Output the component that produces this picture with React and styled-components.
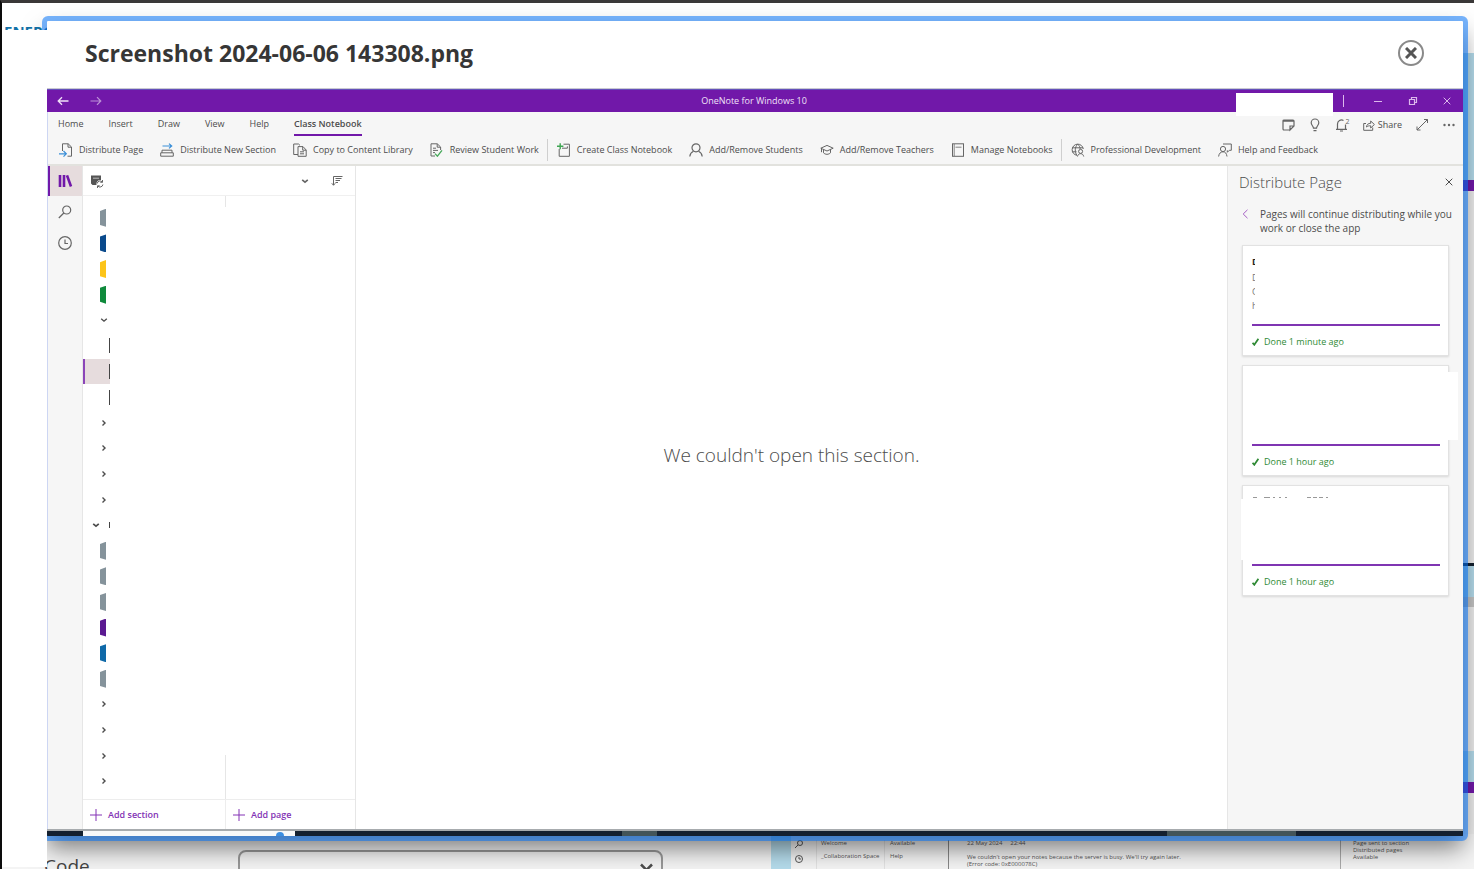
import React from 'react';
import styled, { createGlobalStyle, css } from 'styled-components';

const palette = {
  purple: '#7118a9',
  line: '#e6e6e6',
  panel: '#f6f6f6',
  text: '#4c4c4c',
  icon: '#666666',
  green: '#2f8a35',
  blue: '#3a8fd8',
};

const GlobalStyle = createGlobalStyle`
  * { box-sizing: border-box; }
  body {
    margin: 0;
    font-family: 'Open Sans', 'Noto Sans', sans-serif;
    color: ${palette.text};
    background: #fff;
  }
  button {
    margin: 0;
    padding: 0;
    border: 0;
    background: none;
    font: inherit;
    color: inherit;
    display: flex;
    align-items: center;
    white-space: nowrap;
  }
  svg { display: block; flex: none; }
  p, h1, h2, ul { margin: 0; padding: 0; }
`;

/* page behind the dialog */
const Page = styled.div`
  position: relative;
  height: 100vh;
  overflow: hidden;
  display: grid;
  grid-template-columns: 1fr 12px;
  grid-template-rows: 1fr 35px;
  border-top: 3px solid #3a3838;
  border-left: 2px solid #0c0c0c;
`;

const SiteName = styled.div`
  padding: 18px 0 0 2px;
  color: #1272a8;
  font-size: 15px;
  line-height: 20px;
  font-weight: 700;
`;

const EdgeStrip = styled.div`
  display: flex;
  flex-direction: column;
`;

const EdgePart = styled.div`
  flex: ${(p) => p.$size} 0 0;
  background: ${(p) => p.$color};
`;

const FormStrip = styled.div`
  grid-column: 1 / 3;
  display: flex;
  background: #f4f4f4;
`;

const FormLabel = styled.label`
  width: 236px;
  padding: 16px 0 0 42px;
  font-size: 19px;
  line-height: 32px;
  color: #444;
`;

const FormSelect = styled.select`
  width: 425px;
  height: 44px;
  margin-top: 16px;
  appearance: none;
  border: 2px solid #999;
  border-radius: 8px;
  background: transparent;
`;

const SelectArrow = styled.div`
  width: 108px;
  padding-top: 29px;
  svg { margin-left: -23px; }
`;

const Thumb = styled.div`
  flex: 1;
  display: flex;
  border-left: 20px solid #b5dcec;
  font-size: 6px;
  line-height: 7px;
  padding-top: 6px;
  color: #555;
  white-space: nowrap;
`;

const ThumbColumn = styled.div`
  width: ${(p) => p.$width}px;
  padding-left: ${(p) => p.$indent || 0}px;
  border-right: 1px solid ${(p) => p.$line || 'transparent'};
  overflow: hidden;
  p + p { margin-top: ${(p) => p.$gap || 0}px; }
`;

/* dialog */
const Dialog = styled.section`
  position: absolute;
  top: 18px;
  left: 45px;
  right: 11px;
  bottom: 33px;
  display: flex;
  flex-direction: column;
  background: #fff;
  border-radius: 1px;
  outline: 5px solid rgba(5, 116, 250, 0.54);
  box-shadow: 0 12px 24px rgba(0, 0, 0, 0.5);
`;

const DialogHeader = styled.header`
  height: 68px;
  flex: none;
  display: flex;
  align-items: center;
  justify-content: space-between;
  padding: 0 39px 4px 38px;
  border-bottom: 1px solid #c9c9d2;
  h1 {
    font-size: 23px;
    line-height: 32px;
    font-weight: 700;
    color: #363636;
  }
`;

const CloseButton = styled.button`
  width: 26px;
  height: 26px;
  justify-content: center;
  border: 2px solid #8a8a8a;
  border-radius: 50%;
`;

const MarginCover = styled.div`
  position: absolute;
  left: 0;
  top: 27px;
  bottom: 2px;
  width: 45px;
  background: #fff;
`;

const AppWindow = styled.div`
  flex: 1;
  min-height: 0;
  display: flex;
  flex-direction: column;
  font-size: 9px;
  line-height: 12px;
  border-left: 1px solid #cdd6f3;
`;

const TitleBar = styled.div`
  position: relative;
  height: 23px;
  flex: none;
  display: grid;
  grid-template-columns: 1fr auto 1fr;
  align-items: center;
  padding: 0 12px 0 10px;
  margin-left: -1px;
  background: ${palette.purple};
  border-top: 1px solid #6450bb;
  color: #f0e2f7;
`;

const NavArrows = styled.div`
  display: flex;
  gap: 21px;
  button:last-child { opacity: 0.6; }
`;

const WindowControls = styled.div`
  display: flex;
  justify-content: flex-end;
  align-items: center;
  gap: 25px;
  color: #dcb8ec;
`;

const AccountCover = styled.div`
  position: absolute;
  right: 130px;
  top: 3px;
  width: 97px;
  height: 23px;
  background: #fff;
`;

const Ribbon = styled.div`
  height: 54px;
  flex: none;
  background: ${palette.panel};
  border-bottom: 2px solid #e2e2de;
  svg { color: ${palette.icon}; }
`;

const TabRow = styled.nav`
  display: flex;
  justify-content: space-between;
  height: 24px;
  padding: 2px 7px 0 10px;
`;

const Tabs = styled.div`
  display: flex;
  gap: 25px;
`;

const Tab = styled.button`
  border-bottom: 2px solid transparent;
  ${(p) =>
    p.$active &&
    css`
      font-weight: 600;
      border-bottom-color: ${palette.purple};
    `}
`;

const TabActions = styled.div`
  display: flex;
  align-items: center;
  gap: 13px;
  button { gap: 3px; }
`;

const Toolbar = styled.div`
  display: flex;
  align-items: center;
  height: 28px;
  padding-left: 2px;
`;

const Tool = styled.button`
  gap: 6px;
  padding: 0 8px 0 9px;
`;

const ToolDivider = styled.span`
  width: 1px;
  height: 22px;
  background: #cfcfcf;
`;

const Body = styled.div`
  flex: 1;
  min-height: 0;
  display: flex;
`;

const Rail = styled.aside`
  width: 35px;
  background: ${palette.panel};
  border-right: 1px solid ${palette.line};
`;

const RailButton = styled.button`
  width: 100%;
  height: 31px;
  padding-left: 10px;
  color: ${palette.icon};
  ${(p) =>
    p.$active &&
    css`
      height: 30px;
      padding-left: 8px;
      color: ${palette.purple};
      border-left: 2px solid ${palette.purple};
      background: #e6dcdd;
    `}
`;

const Notebook = styled.div`
  width: 273px;
  display: flex;
  flex-direction: column;
  border-right: 1px solid ${palette.line};
`;

const NotebookHeader = styled.div`
  height: 30px;
  flex: none;
  display: flex;
  align-items: center;
  padding: 0 12px 0 7px;
  border-bottom: 1px solid #f0f0f0;
  color: ${palette.icon};
  button:first-child { margin-right: auto; }
  button:last-child { margin-left: 22px; }
`;

const Columns = styled.div`
  flex: 1;
  min-height: 0;
  display: flex;
`;

const SectionList = styled.ul`
  width: 142px;
  list-style: none;
  display: flex;
  flex-direction: column;
  padding: 9px 0 5px;
`;

const ColumnRule = styled.div`
  width: 1px;
  background: linear-gradient(
    ${palette.line} 11px,
    transparent 11px,
    transparent calc(100% - 44px),
    ${palette.line} calc(100% - 44px)
  );
`;

const SectionRow = styled.li`
  flex: 1;
  width: 27px;
  display: flex;
  align-items: center;
  justify-content: flex-end;
  padding-right: ${(p) => p.$end}px;
  ${(p) =>
    p.$selected &&
    css`
      border-left: 2px solid #8b45b8;
      background: #e6dcdd;
    `}
`;

const Swatch = styled.span`
  width: 6px;
  height: 18px;
  background: ${(p) => p.$color};
  clip-path: polygon(0 12%, 100% 0, 100% 100%, 0 90%);
`;

const PageMark = styled.span`
  width: 1px;
  height: ${(p) => p.$height}px;
  margin-left: 9px;
  background: #444;
`;

const NotebookFooter = styled.div`
  height: 30px;
  flex: none;
  display: grid;
  grid-template-columns: 143px 1fr;
  border-top: 1px solid #ededed;
  color: #8333b5;
  font-weight: 600;
  button {
    gap: 6px;
    padding-left: 7px;
  }
  button:first-child { border-right: 1px solid #ededed; }
`;

const Canvas = styled.main`
  flex: 1;
  display: flex;
  align-items: center;
  justify-content: center;
  padding-bottom: 85px;
  font-size: 19px;
  line-height: 26px;
  font-weight: 300;
`;

const Pane = styled.aside`
  width: 236px;
  padding: 5px 14px 0;
  background: ${palette.panel};
  border-left: 1px solid ${palette.line};
`;

const PaneHeader = styled.div`
  display: flex;
  align-items: center;
  justify-content: space-between;
  margin: 0 -4px 0 -3px;
  h2 {
    font-size: 15px;
    line-height: 22px;
    font-weight: 300;
  }
`;

const PaneNote = styled.div`
  display: flex;
  gap: 11px;
  padding-top: 14px;
  margin-right: -8px;
  font-size: 10px;
  line-height: 14px;
  svg { margin-top: 2px; }
`;

const Cards = styled.div`
  display: flex;
  flex-direction: column;
  gap: 9px;
  padding-top: 10px;
`;

const Card = styled.article`
  position: relative;
  height: 111px;
  display: flex;
  flex-direction: column;
  justify-content: flex-end;
  padding: 0 8px 7px 9px;
  background: #fff;
  border: 1px solid #e2e2e2;
  box-shadow: 0 1px 2px rgba(0, 0, 0, 0.12);
`;

const CardText = styled.div`
  width: 3px;
  margin-bottom: 11px;
  overflow: hidden;
  line-height: 14px;
  color: #777;
  strong {
    display: block;
    line-height: 18px;
    color: #222;
  }
`;

const CardCover = styled.div`
  position: absolute;
  background: #fff;
  ${(p) =>
    p.$wide
      ? 'left: 2px; right: -10px; top: 6px; height: 68px;'
      : 'left: -2px; right: 8px; top: 13px; height: 61px;'}
`;

const Progress = styled.div`
  height: 2px;
  background: #7f35b2;
`;

const Done = styled.p`
  display: flex;
  align-items: center;
  gap: 5px;
  padding-top: 10px;
  color: ${palette.green};
`;

const Taskbar = styled.div`
  height: 7px;
  flex: none;
  display: flex;
  margin-left: -1px;
  border-top: 2px solid #a7abae;
  background: #14202f;
`;

const TaskSearch = styled.div`
  width: 212px;
  margin-left: 36px;
  background: #f8f8f8;
  display: flex;
  align-items: flex-end;
  justify-content: flex-end;
  padding-right: 10px;
`;

const TaskItem = styled.div`
  width: ${(p) => p.$width}px;
  margin-left: ${(p) => (p.$push ? 'auto' : '327px')};
  margin-right: ${(p) => (p.$push ? '167px' : 0)};
  background: #435458;
`;

const Svg = ({ w = 14, h = 14, sw = 1, children }) => (
  <svg
    width={w}
    height={h}
    viewBox={`0 0 ${w} ${h}`}
    fill="none"
    stroke="currentColor"
    strokeWidth={sw}
    aria-hidden="true"
  >
    {children}
  </svg>
);

const ArrowLeft = () => (
  <Svg w={12} h={10} sw={1.3}>
    <path d="M11.5 5H1.2M5 1.2L1.2 5L5 8.8" />
  </Svg>
);
const ArrowRight = () => (
  <Svg w={12} h={10} sw={1.2}>
    <path d="M.5 5h10.3M7 1.2L10.8 5L7 8.8" />
  </Svg>
);
const Chevron = ({ down, w }) => (
  <Svg w={8} h={8} sw={w || 1.4}>
    <path d={down ? 'M1.2 2.8L4 5.2L6.8 2.8' : 'M3.5 1.6L6 4L3.5 6.4'} />
  </Svg>
);
const Cross = ({ size = 8, w = 1 }) => (
  <Svg w={size} h={size} sw={w}>
    <path d={`M.7 .7L${size - 0.7} ${size - 0.7}M${size - 0.7} .7L.7 ${size - 0.7}`} />
  </Svg>
);
const Plus = () => (
  <Svg w={12} h={12}>
    <path d="M6 0v12M0 6h12" />
  </Svg>
);
const Check = () => (
  <Svg w={7} h={8} sw={1.7}>
    <path d="M.6 4.8L2.3 6.8L6.4 .8" />
  </Svg>
);

const toolIcons = {
  page: (
    <Svg>
      <path d="M3.5 8V.8H9.2L12.5 4v9.2H8.5M9 .8V4.2h3.5" />
      <path d="M0 10.8h7M4.5 8L7.3 10.8L4.5 13.6" stroke={palette.blue} strokeWidth="1.2" />
    </Svg>
  ),
  section: (
    <Svg>
      <path d="M2 7.2h10M.7 13.2V9.8h12.6v3.4zM2 7.2V9.8M12 7.2V9.8" />
      <path d="M2.5 3h9M9 .6L11.7 3L9 5.4" stroke={palette.blue} strokeWidth="1.2" />
    </Svg>
  ),
  copy: (
    <Svg>
      <path d="M5 11.5H.7V1h4.8L7 2.4M5 3.6h5L13.2 7v6.3H5zM9.7 3.8v3.4h3.4M7 8.8h4M7 10.8h4" />
    </Svg>
  ),
  review: (
    <Svg>
      <path d="M5 13H1V.8h6.3L10.6 4v3M7.2 1v3.2h3.2M3 5.2h3M3 7.4h5M3 9.6h2" />
      <path d="M5 10.6l2.4 2.6L12 7.4" stroke="#46a85a" strokeWidth="1.3" />
    </Svg>
  ),
  create: (
    <Svg>
      <path d="M2.2 6v7.3h10.2V1.2H6.5M5 5.2h5.4V3.4" />
      <path d="M0 3.2h6.4M3.2 .2v6" stroke="#3fa653" strokeWidth="1.4" />
    </Svg>
  ),
  student: (
    <Svg sw={1.2}>
      <circle cx="7" cy="4.8" r="4" />
      <path d="M.8 13.5c.3-2.8 1.8-4.4 3.7-5.2M13.2 13.5c-.3-2.8-1.8-4.4-3.7-5.2" />
    </Svg>
  ),
  teacher: (
    <Svg>
      <path d="M.8 5.2L7 2.4l6.2 2.8L7 8zM3.5 6.6v3.2C5.3 11.8 8.7 11.8 10.5 9.8V6.6M1.5 5.6v3.6" />
    </Svg>
  ),
  manage: (
    <Svg>
      <rect x="1.5" y=".8" width="11" height="12.5" />
      <path d="M4.5 4.2h6M3.2 1v12" strokeWidth=".8" />
    </Svg>
  ),
  globe: (
    <Svg>
      <path d="M6 12.3A5.6 5.6 0 1 1 12.3 6M1 4.8h11M1 8.8h4.5M6 12.3C3.6 9.5 3.6 4 6.7 1.2C8.4 2.6 9 4.3 9.2 6" />
      <circle cx="9.6" cy="8.4" r="2" />
      <path d="M6.5 13.5c.4-1.9 1.5-2.8 3.1-2.8s2.7.9 3.1 2.8" />
    </Svg>
  ),
  help: (
    <Svg>
      <path d="M5 1h8.3v6.3h-2L9.3 9.3V7.3" />
      <circle cx="5" cy="6" r="2.6" />
      <path d="M.6 13.5C1 10.5 2.6 8.8 5 8.8s3.6 1.7 4 4.7" />
    </Svg>
  ),
};

const tools = [
  ['page', 'Distribute Page'],
  ['section', 'Distribute New Section'],
  ['copy', 'Copy to Content Library'],
  ['review', 'Review Student Work'],
  null,
  ['create', 'Create Class Notebook'],
  ['student', 'Add/Remove Students'],
  ['teacher', 'Add/Remove Teachers'],
  ['manage', 'Manage Notebooks'],
  null,
  ['globe', 'Professional Development'],
  ['help', 'Help and Feedback'],
];

const tabs = ['Home', 'Insert', 'Draw', 'View', 'Help', 'Class Notebook'];

const grey = '#85939b';
const sections = [
  grey, '#0a4a8c', '#fcc419', '#0f8a3c',
  'open', 'page', 'selected', 'page',
  'closed', 'closed', 'closed', 'closed',
  'group',
  grey, grey, grey, '#5b1a91', '#0f69a8', grey,
  'closed', 'closed', 'closed', 'closed',
];

const Section = ({ kind }) => {
  if (kind === 'open')
    return <SectionRow $end={2}><Chevron down /></SectionRow>;
  if (kind === 'closed')
    return <SectionRow $end={3}><Chevron /></SectionRow>;
  if (kind === 'group')
    return (
      <SectionRow $end={0}>
        <Chevron down w={1.7} />
        <PageMark $height={6} />
      </SectionRow>
    );
  if (kind === 'page' || kind === 'selected')
    return (
      <SectionRow $end={0} $selected={kind === 'selected'}>
        <PageMark $height={15} />
      </SectionRow>
    );
  return (
    <SectionRow $end={4}>
      <Swatch $color={kind} />
    </SectionRow>
  );
};

const edge = [
  [50, '#fff'], [127, '#b5dcec'], [11, '#7118a9'], [372, '#eeeeee'],
  [3, '#14202f'], [31, '#b5dcec'], [10, '#c4c4c4'], [144, '#eeeeee'],
  [31, '#b5dcec'], [11, '#7118a9'], [41, '#eeeeee'],
];

const Background = () => (
  <>
    <SiteName>ENERGY</SiteName>
    <EdgeStrip>
      {edge.map(([size, color], i) => (
        <EdgePart key={i} $size={size} $color={color} />
      ))}
    </EdgeStrip>
    <FormStrip>
      <FormLabel htmlFor="code">Code</FormLabel>
      <FormSelect id="code" />
      <SelectArrow>
        <Svg w={13} h={9} sw={2.5}>
          <path d="M1 1.5L6.5 7L12 1.5" />
        </Svg>
      </SelectArrow>
      <Thumb>
        <ThumbColumn $width={26} $indent={4} $line="#e2e2e2">
          <Svg w={8} h={8}><circle cx="5" cy="3" r="2.5" /><path d="M3 5L0 8" /></Svg>
          <Svg w={9} h={16}><circle cx="4" cy="11" r="3.5" /><path d="M4 9v2h2" /></Svg>
        </ThumbColumn>
        <ThumbColumn $width={68} $indent={4} $gap={6} $line="#e2e2e2">
          <p>Welcome</p>
          <p>_Collaboration Space</p>
        </ThumbColumn>
        <ThumbColumn $width={64} $indent={5} $gap={6} $line="#888">
          <p>Available</p>
          <p>Help</p>
        </ThumbColumn>
        <ThumbColumn $width={392} $indent={18} $gap={7} $line="#aaa">
          <p>22 May 2024 &nbsp; &nbsp; 22:44</p>
          <p>
            We couldn't open your notes because the server is busy. We'll try
            again later.
            <br />
            (Error code: 0xE000078C)
          </p>
        </ThumbColumn>
        <ThumbColumn $width={100} $indent={12}>
          <p>Page sent to section</p>
          <p>Distributed pages</p>
          <p>Available</p>
        </ThumbColumn>
      </Thumb>
    </FormStrip>
  </>
);

const RibbonBar = () => (
  <Ribbon>
    <TabRow>
      <Tabs>
        {tabs.map((tab) => (
          <Tab key={tab} $active={tab === 'Class Notebook'}>{tab}</Tab>
        ))}
      </Tabs>
      <TabActions>
        <button aria-label="Sticky notes">
          <Svg sw={1.2}>
            <path d="M8.5 12H3a1 1 0 0 1-1-1V3a1 1 0 0 1 1-1h9a1 1 0 0 1 1 1v5l-4 4V8h4M2 3.2h11" />
          </Svg>
        </button>
        <button aria-label="Tell me">
          <Svg sw={1.2}>
            <path d="M5.5 10.2C5.5 8 3.2 7.4 3.2 4.8a3.8 3.8 0 0 1 7.6 0C10.8 7.4 8.5 8 8.5 10.2zM5.5 12.6h3" />
          </Svg>
        </button>
        <button aria-label="Notifications, 2 new">
          <Svg w={15} h={16} sw={1.2}>
            <path d="M1 12.3h11M2.5 12V7a4 4 0 0 1 6-3.5M10.5 12V7.5M5 14h3" />
            <text x="10.5" y="6.5" fontSize="7" fill="currentColor" stroke="none">2</text>
          </Svg>
        </button>
        <button>
          <Svg w={12} h={12}>
            <path d="M3 4.5H.7v6.8h9V8.5M3.5 8c.2-2.5 1.8-3.7 4.2-3.7V2l3.7 3.5L7.7 9V6.8C6 6.7 4.6 7 3.5 8z" />
          </Svg>
          Share
        </button>
        <button aria-label="Full screen">
          <Svg>
            <path d="M2 12L12.5 1.5M9 1.5h3.5V5M2 8.500V12h3.5" />
          </Svg>
        </button>
        <button aria-label="More">
          <Svg w={14} h={4}>
            <g fill="currentColor" stroke="none">
              <circle cx="2.5" cy="2" r="1.2" />
              <circle cx="7" cy="2" r="1.2" />
              <circle cx="11.5" cy="2" r="1.2" />
            </g>
          </Svg>
        </button>
      </TabActions>
    </TabRow>
    <Toolbar>
      {tools.map((tool, i) =>
        tool ? (
          <Tool key={i}>
            {toolIcons[tool[0]]}
            {tool[1]}
          </Tool>
        ) : (
          <ToolDivider key={i} />
        )
      )}
    </Toolbar>
  </Ribbon>
);

const NotebookPanel = () => (
  <Notebook>
    <NotebookHeader>
      <button aria-label="Notebook sync">
        <Svg>
          <path d="M1 1.5h10v4.5a4 4 0 0 0-4.5 5H2.5L1 9.5z" fill="#555" stroke="none" />
          <path d="M3 4.2h6" stroke="#bbb" />
          <path d="M7.2 9.5A2.9 2.9 0 0 1 12.3 8M12.9 10.5A2.9 2.9 0 0 1 7.8 12M12.5 6v2.3h-2.2M7.5 14v-2.2h2.2" />
        </Svg>
      </button>
      <button aria-label="Choose notebook"><Chevron down w={1.6} /></button>
      <button aria-label="Sort pages">
        <Svg w={12} h={12}>
          <path d="M2.5 1.5V10M.8 8.3L2.5 10.3L4.2 8.3M2.5 1.5h9M4.5 3.5h6M4.5 5.5h4.5M4.5 7.5h2.5" />
        </Svg>
      </button>
    </NotebookHeader>
    <Columns>
      <SectionList>
        {sections.map((kind, i) => (
          <Section key={i} kind={kind} />
        ))}
      </SectionList>
      <ColumnRule />
    </Columns>
    <NotebookFooter>
      <button><Plus />Add section</button>
      <button><Plus />Add page</button>
    </NotebookFooter>
  </Notebook>
);

const DistributePane = () => (
  <Pane>
    <PaneHeader>
      <h2>Distribute Page</h2>
      <button aria-label="Close pane"><Cross /></button>
    </PaneHeader>
    <PaneNote>
      <Svg w={7} h={10}>
        <path d="M5.5 .8L1.2 5L5.5 9.2" stroke="#a55fc4" />
      </Svg>
      <p>
        Pages will continue distributing while you
        <br />
        work or close the app
      </p>
    </PaneNote>
    <Cards>
      <Card>
        <CardText>
          <strong>D</strong>
          D<br />
          C<br />h
        </CardText>
        <Progress />
        <Done><Check />Done 1 minute ago</Done>
      </Card>
      <Card>
        <CardCover $wide />
        <Progress />
        <Done><Check />Done 1 hour ago</Done>
      </Card>
      <Card>
        <Svg w={80} h={67}>
          <path d="M1 .5h4M12 .5h6M21 .5h2M27 .5h2M33 .5h2M55 .5h4M61 .5h4M67 .5h4M74 .5h2" stroke="#999" />
        </Svg>
        <CardCover />
        <Progress />
        <Done><Check />Done 1 hour ago</Done>
      </Card>
    </Cards>
  </Pane>
);

const App = () => {
  return (
    <Page>
      <GlobalStyle />
      <Background />
      <Dialog role="dialog" aria-labelledby="dialog-title">
        <DialogHeader>
          <h1 id="dialog-title">Screenshot 2024-06-06 143308.png</h1>
          <CloseButton aria-label="Close">
            <Svg w={12} h={12} sw={3}>
              <path d="M1 1L11 11M11 1L1 11" stroke="#555" />
            </Svg>
          </CloseButton>
        </DialogHeader>
        <AppWindow>
          <TitleBar>
            <NavArrows>
              <button aria-label="Back"><ArrowLeft /></button>
              <button aria-label="Forward"><ArrowRight /></button>
            </NavArrows>
            <span>OneNote for Windows 10</span>
            <WindowControls>
              <Svg w={6} h={12}><path d="M1.5 0v12" /></Svg>
              <button aria-label="Minimise">
                <Svg w={10} h={8}><path d="M1 4.5h8" /></Svg>
              </button>
              <button aria-label="Restore">
                <Svg w={10} h={10} sw={1.2}>
                  <path d="M1.5 3.5h5v5h-5zM3.5 3.5v-2h5v5h-2" />
                </Svg>
              </button>
              <button aria-label="Close window"><Cross /></button>
            </WindowControls>
            <AccountCover />
          </TitleBar>
          <RibbonBar />
          <Body>
            <Rail>
              <RailButton $active aria-label="Notebooks">
                <Svg w={15} h={12} sw={2.6}>
                  <path d="M2 0v12M6 0v12M9 .4L13 11.5" />
                </Svg>
              </RailButton>
              <RailButton aria-label="Search">
                <Svg sw={1.2}>
                  <circle cx="8.7" cy="5" r="4" />
                  <path d="M5.8 8L.8 13" />
                </Svg>
              </RailButton>
              <RailButton aria-label="Recent notes">
                <Svg sw={1.2}>
                  <circle cx="7" cy="7" r="6.3" />
                  <path d="M7 3.5v4h3" />
                </Svg>
              </RailButton>
            </Rail>
            <NotebookPanel />
            <Canvas>We couldn't open this section.</Canvas>
            <DistributePane />
          </Body>
          <Taskbar>
            <TaskSearch>
              <Svg w={10} h={4}>
                <path d="M1 4a4 4 0 0 1 8 0z" fill="#3d8ee0" stroke="none" />
              </Svg>
            </TaskSearch>
            <TaskItem $width={35} />
            <TaskItem $width={129} $push />
          </Taskbar>
        </AppWindow>
      </Dialog>
      <MarginCover />
    </Page>
  );
};

export default App;
